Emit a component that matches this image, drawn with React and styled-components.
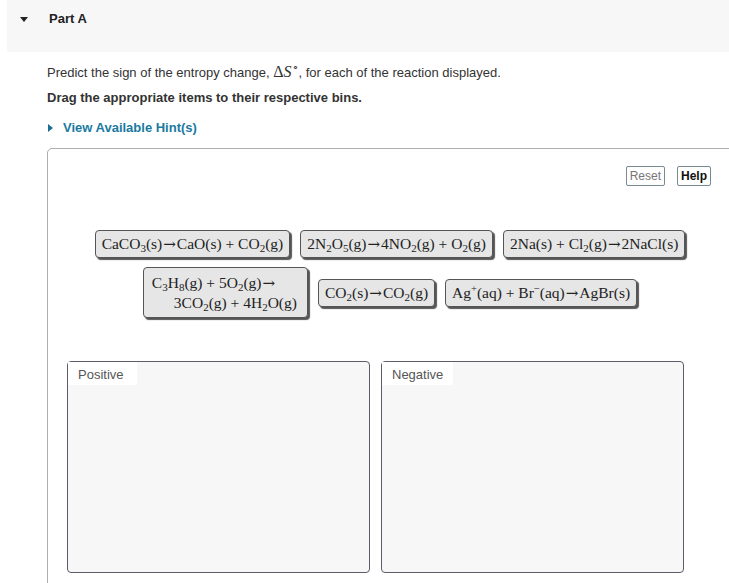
import React from "react";
import styled, { createGlobalStyle } from "styled-components";

const Global = createGlobalStyle`
  html, body { margin: 0; padding: 0; background: #fff; }
  body { font-family: "Liberation Sans", Arial, sans-serif; color: #333; }
`;

const Page = styled.div`
  width: 729px;
  height: 583px;
  overflow: hidden;
`;

const PartHeader = styled.div`
  margin-left: 7px;
  height: 52px;
  background: #f7f7f7;
  display: flex;
  align-items: flex-start;
  padding: 11px 0 0 13px;
  box-sizing: border-box;
  gap: 20px;
`;

const DownTri = styled.span`
  width: 0;
  height: 0;
  margin-top: 6px;
  border-left: 4.5px solid transparent;
  border-right: 4.5px solid transparent;
  border-top: 5px solid #222;
`;

const PartTitle = styled.span`
  font-size: 13px;
  font-weight: bold;
  color: #222;
  line-height: 16px;
  margin-left: 1px;
`;

const Body = styled.div`
  padding-left: 47px;
`;

const Prompt = styled.p`
  margin: 0;
  padding-top: 12px;
  font-size: 13px;
  line-height: 16px;
  color: #333;
`;

const MathSym = styled.span`
  font-family: "Liberation Serif", "Times New Roman", serif;
  font-size: 16px;
  font-style: ${(p) => (p.$italic ? "italic" : "normal")};
`;

const Instruction = styled.p`
  margin: 9px 0 0;
  font-size: 13px;
  line-height: 16px;
  font-weight: bold;
  color: #333;
`;

const Hint = styled.div`
  margin-top: 14px;
  display: flex;
  align-items: center;
  gap: 10px;
  padding-left: 1px;
  font-size: 13px;
  font-weight: bold;
  color: #1a7aa0;
  line-height: 16px;
`;

const RightTri = styled.span`
  width: 0;
  height: 0;
  border-top: 4.5px solid transparent;
  border-bottom: 4.5px solid transparent;
  border-left: 5px solid #1a6f92;
`;

const Board = styled.div`
  margin-top: 12px;
  width: 688px;
  height: 460px;
  border: 1px solid #adadad;
  border-radius: 5px 5px 0 0;
  box-sizing: border-box;
  padding: 17px 23px 0 19px;
`;

const Toolbar = styled.div`
  display: flex;
  justify-content: flex-end;
  gap: 12px;
`;

const ToolButton = styled.button`
  height: 20px;
  padding: 0 3px;
  background: #fff;
  border: 1px solid #7a8a92;
  border-radius: 2px;
  font-family: "Liberation Sans", Arial, sans-serif;
  font-size: 12px;
  font-weight: ${(p) => (p.$strong ? "bold" : "normal")};
  color: ${(p) => (p.$strong ? "#111" : "#777")};
`;

const Pool = styled.div`
  margin-top: 44px;
  display: flex;
  flex-direction: column;
  align-items: center;
  gap: 9px;
  padding-left: 2px;
`;

const PoolRow = styled.div`
  display: flex;
  align-items: center;
  gap: 10px;
`;

const Item = styled.div`
  background: #e6e6e6;
  border: 1px solid #555;
  border-radius: 4px;
  box-shadow: 2px 2px 1px #555;
  padding: ${(p) => (p.$tall ? "5px 10px 4px 8px" : "3px 6px")};
  font-family: "Liberation Serif", "Times New Roman", serif;
  font-size: 15.5px;
  line-height: 20px;
  color: #222;
  white-space: nowrap;
`;

const Line2 = styled.div`
  padding-left: 22px;
`;

const Bins = styled.div`
  margin-top: 43px;
  display: flex;
  gap: 11px;
`;

const Bin = styled.div`
  width: 303px;
  height: 212px;
  background: #f7f7f7;
  border: 1.5px solid #5c5c6a;
  border-radius: 4px;
  box-sizing: border-box;
`;

const BinLabel = styled.div`
  display: inline-block;
  background: #fff;
  padding: 5px 10px 2px 10px;
  min-width: 49px;
  font-size: 13px;
  line-height: 16px;
  color: #555;
`;

const Sub = styled.sub`
  font-size: 11px;
  vertical-align: -3px;
  line-height: 0;
`;
const Sup = styled.sup`
  font-size: 10.5px;
  vertical-align: 6px;
  line-height: 0;
`;

const Arrow = styled.span`
  font-family: "DejaVu Serif", serif;
  font-size: 15px;
  margin: 0 1px;
`;

const Arr = () => <Arrow>→</Arrow>;

export default function App() {
  return (
    <Page>
      <Global />
      <PartHeader>
        <DownTri />
        <PartTitle>Part A</PartTitle>
      </PartHeader>
      <Body>
        <Prompt>
          Predict the sign of the entropy change, <MathSym>Δ</MathSym>
          <MathSym $italic>S</MathSym>
          <Sup>∘</Sup>, for each of the reaction displayed.
        </Prompt>
        <Instruction>Drag the appropriate items to their respective bins.</Instruction>
        <Hint>
          <RightTri />
          View Available Hint(s)
        </Hint>
        <Board>
          <Toolbar>
            <ToolButton>Reset</ToolButton>
            <ToolButton $strong>Help</ToolButton>
          </Toolbar>
          <Pool>
            <PoolRow>
              <Item>
                CaCO<Sub>3</Sub>(s)<Arr />CaO(s) + CO<Sub>2</Sub>(g)
              </Item>
              <Item>
                2N<Sub>2</Sub>O<Sub>5</Sub>(g)<Arr />4NO<Sub>2</Sub>(g) + O<Sub>2</Sub>(g)
              </Item>
              <Item>
                2Na(s) + Cl<Sub>2</Sub>(g)<Arr />2NaCl(s)
              </Item>
            </PoolRow>
            <PoolRow>
              <Item $tall>
                <div>
                  C<Sub>3</Sub>H<Sub>8</Sub>(g) + 5O<Sub>2</Sub>(g)<Arr />
                </div>
                <Line2>
                  3CO<Sub>2</Sub>(g) + 4H<Sub>2</Sub>O(g)
                </Line2>
              </Item>
              <Item>
                CO<Sub>2</Sub>(s)<Arr />CO<Sub>2</Sub>(g)
              </Item>
              <Item>
                Ag<Sup>+</Sup>(aq) + Br<Sup>−</Sup>(aq)<Arr />AgBr(s)
              </Item>
            </PoolRow>
          </Pool>
          <Bins>
            <Bin>
              <BinLabel>Positive</BinLabel>
            </Bin>
            <Bin>
              <BinLabel>Negative</BinLabel>
            </Bin>
          </Bins>
        </Board>
      </Body>
    </Page>
  );
}
